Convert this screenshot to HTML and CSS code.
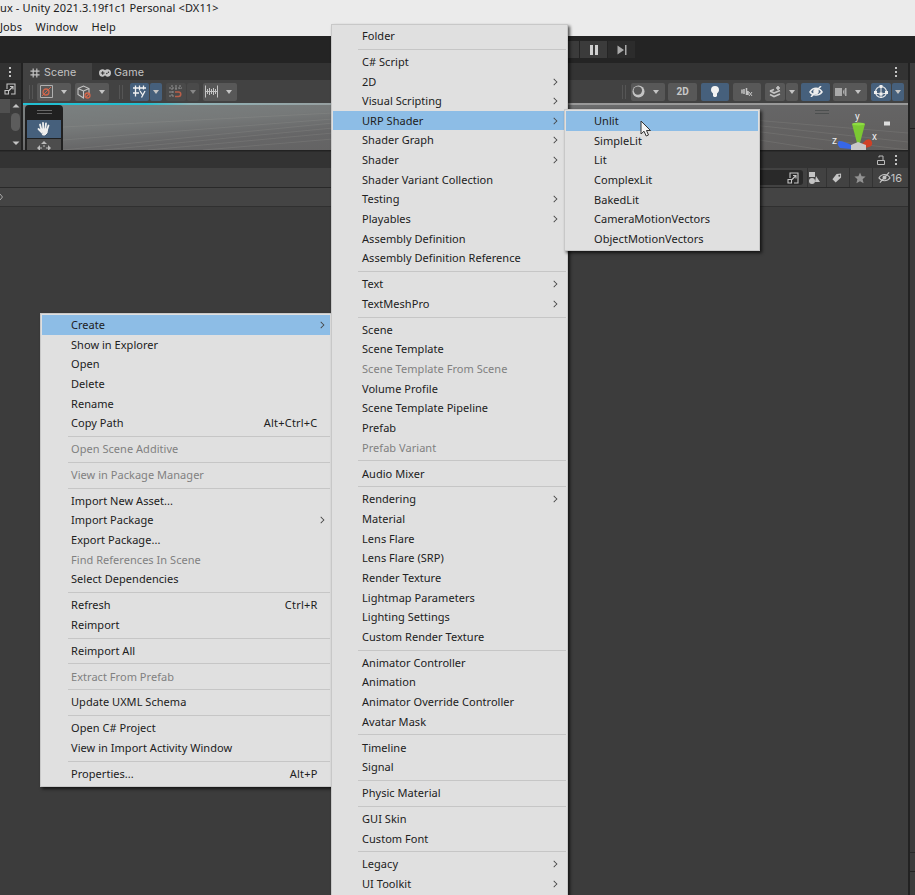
FILE: index.html
```html
<!DOCTYPE html>
<html lang="en">
<head>
<meta charset="utf-8">
<title>Unity 2021.3.19f1c1 Personal</title>
<link rel="stylesheet" href="styles.css">
</head>
<body>
<div class="app">
  <header class="titlebar">
    <div class="title">ux - Unity 2021.3.19f1c1 Personal &lt;DX11&gt;</div>
    <nav class="menubar"><span>Jobs</span><span>Window</span><span>Help</span></nav>
  </header>
  <div class="playbar">
    <div class="play"></div>
    <div class="play"><svg width="10" height="10" viewBox="0 0 10 10"><path fill="#d0d0d0" d="M1 0h3v10H1zM6 0h3v10H6z"/></svg></div>
    <div class="play off"><svg width="10" height="10" viewBox="0 0 10 10"><path fill="#aaa" d="M0.500 0.500L7 5L0.500 9.500zM8 0h1.500v10H8z"/></svg></div>
  </div>
  <div class="workspace">
    <div class="main">
      <div class="upper">
        <aside class="side">
          <div class="side-head"><svg width="4" height="12" viewBox="0 0 4 12"><path fill="#c4c4c4" d="M1 1h2v2H1zM1 5h2v2H1zM1 9h2v2H1z"/></svg></div>
          <div class="side-tool"><svg width="12" height="12" viewBox="0 0 12 12" fill="none" stroke="#c4c4c4" stroke-width="1.100"><path d="M3 6V1h8v10H7M6 3.500h3v3M9 3.500L5 7.500M1 7.500h3.500V11H1z"/></svg></div>
          <div class="side-body">
            <div class="side-row"></div>
            <div class="scroller">
              <svg width="8" height="5" viewBox="0 0 8 5"><path fill="#c4c4c4" d="M0.500 4.500L4 1l3.500 3.500z"/></svg>
              <div class="thumb"></div>
              <svg width="8" height="5" viewBox="0 0 8 5"><path fill="#c4c4c4" d="M0.500 0.500h7L4 4z"/></svg>
            </div>
          </div>
        </aside>
        <section class="scene">
          <div class="tabs">
            <div class="tab active"><svg width="10" height="10" viewBox="0 0 11 11" stroke="#c4c4c4" stroke-width="1.300"><path d="M3.500 0.500v10M7.500 0.500v10M0.500 3.500h10M0.500 7.500h10"/></svg>Scene</div>
            <div class="tab"><svg width="12" height="8" viewBox="0 0 13 8"><path fill="#c4c4c4" d="M4 0a4 4 0 100 8q1.500 0 2.500-1.500Q7.500 8 9 8a4 4 0 100-8q-1.500 0-2.500 1Q5.500 0 4 0z"/><path d="M2 4h4M4 2v4" stroke="#333" stroke-width="1.200"/><circle cx="8.500" cy="4.500" r=".8" fill="#333"/><circle cx="10.200" cy="3.200" r=".8" fill="#333"/></svg>Game</div>
            <svg class="kebab" width="4" height="12" viewBox="0 0 4 12"><path fill="#c4c4c4" d="M1 1h2v2H1zM1 5h2v2H1zM1 9h2v2H1z"/></svg>
          </div>
          <div class="toolbar">
            <i class="grip"></i>
            <div class="btn wide"><svg width="13" height="13" viewBox="0 0 13 13" fill="none"><path stroke="#b0b0b0" d="M.5.5h12v12H.5z"/><circle cx="6" cy="7" r="3" stroke="#d0664c" stroke-width="1.300"/><path stroke="#d0664c" d="M2 11l9-9"/></svg><i class="caret"></i></div>
            <div class="btn wide"><svg width="14" height="14" viewBox="0 0 14 14" fill="none" stroke="#c4c4c4" stroke-width="1.100"><path d="M1 3.500L6.500 1 12 3.500V8M1 3.500v6L6.500 13V6L12 3.500M1 3.500L6.500 6"/><circle cx="10.500" cy="10.500" r="2.500" stroke="#d0664c" stroke-width="1.300"/><path stroke="#d0664c" d="M9 12l3-3"/></svg><i class="caret"></i></div>
            <i class="grip second"></i>
            <div class="split on"><div class="btn"><svg width="13" height="13" viewBox="0 0 13 13" fill="none" stroke="#f2f2f2" stroke-width="1.300"><path d="M2.500 0.500v11M6.500 0.500v5M10.500 0.500v4M0 3h13M0 8h6M7 6l2.300 3.500M12 6L8.500 12.500"/></svg></div><div class="btn drop"><i class="caret"></i></div></div>
            <div class="split dim"><div class="btn"><svg width="13" height="13" viewBox="0 0 13 13" fill="none" stroke="#909090"><path stroke-dasharray="2 1" d="M3 0v12M7 0v5M11 0v4M0 3h13M0 7h5M0 11h5"/><path stroke="#b95f4a" stroke-width="1.600" d="M6 7h3.500a2 2 0 010 4.500H6"/></svg></div><div class="btn drop"><i class="caret"></i></div></div>
            <div class="btn wide"><svg width="13" height="13" viewBox="0 0 13 13" stroke="#c4c4c4"><path d="M.5.5v12M12.500.5v12M2.500 4v5M4.500 3v7M6.500 4v5M8.500 3v7M10.500 4v5M0 6.500h13"/></svg><i class="caret"></i></div>
            <div class="right-tools">
              <i class="grip"></i>
              <div class="btn wide"><svg width="13" height="13" viewBox="0 0 14 14"><circle cx="7" cy="7" r="6.500" fill="#c4c4c4"/><circle cx="6.300" cy="6" r="4.500" fill="#585858"/></svg><i class="caret"></i></div>
              <div class="btn mid"><b>2D</b></div>
              <div class="btn mid on"><svg width="8" height="11" viewBox="0 0 8 11" fill="#f2f2f2"><path d="M4 0a4 4 0 014 4c0 1.500-1 2.500-2 3.500V10L5 11H3L2 10V7.500C1 6.500 0 5.500 0 4a4 4 0 014-4z"/></svg></div>
              <div class="btn mid"><svg width="12" height="10" viewBox="0 0 12 10" stroke="#c4c4c4" fill="none"><path stroke-width="1.500" d="M1 2.500v4M3 2v5M5.500 1v7M7 4v4"/><path d="M8 5l3 4M11 5L8 9"/></svg></div>
              <div class="split"><div class="btn"><svg width="12" height="12" viewBox="0 0 12 12" fill="none" stroke="#c4c4c4" stroke-width="1.700"><path d="M1 5l4 2 6-2.500M1 8.500l4 2L11 8M1 5l4-1.500M9 0v4M7 2h4"/></svg></div><div class="btn drop"><i class="caret"></i></div></div>
              <div class="btn mid on"><svg width="14" height="11" viewBox="0 0 14 11" fill="none" stroke="#eee" stroke-width="1.500"><path d="M1 6c3-5 9-5 12 0-3 4-9 4-12 0zM2 11L12 0"/><circle cx="7" cy="5.500" r="2" fill="#eee"/></svg></div>
              <div class="btn wide cam"><svg width="12" height="8" viewBox="0 0 12 8" fill="#aaa"><path d="M0 0h7v8H0zM8 3l1.500-2v6L8 5zM10 0h1.500v8H10z"/></svg><i class="caret"></i></div>
              <div class="split on"><div class="btn"><svg width="14" height="14" viewBox="0 0 14 14" fill="none" stroke="#eee"><circle cx="7" cy="7" r="5.500" stroke-width="1.200"/><path d="M1.500 8q5.500 2.500 11 0M7 1v12"/><path fill="#eee" stroke="none" d="M5.500 0h3v3h-3zM0 6h3v3H0zM11 6h3v3h-3zM5.500 7.500h3v3h-3z"/></svg></div><div class="btn drop"><i class="caret"></i></div></div>
            </div>
          </div>
          <div class="viewport">
            <div class="tools"><i class="bars"></i>
              <div class="tool on"><svg width="14" height="14" viewBox="0 0 14 14" fill="none" stroke="#eee" stroke-linecap="round"><path stroke-width="1.800" d="M4.500 8L3 2.500M6.300 7L6 1M8.300 7L9 1.300M10 8l1.500-4.500M4.500 10L1.500 7"/><path fill="#eee" d="M4 7h6.500l-.5 4-2 2H6z"/></svg></div>
              <div class="tool move"><svg width="14" height="14" viewBox="0 0 14 14" fill="#bbb"><path d="M7 0l3 3H4zM0 7l3-3v6zM14 7l-3-3v6zM6.500 4h1v2h-1zM3 6.500h2v1H3zM9 6.500h2v1H9z"/></svg></div>
            </div>
            <svg class="ground" viewBox="0 0 885 45" preserveAspectRatio="none">
              <g stroke="#a4a4a3" stroke-width=".7" opacity=".26" fill="none"><path d="M40 22L310 8M40 35L310 14M40 45L310 18M80 45L310 23M125 45L310 28M180 45L310 34M730 15L885 28M730 20L885 37M730 26L885 45M730 34L800 45"/></g>
            </svg>
            <svg class="gizmo" width="80" height="45" viewBox="0 0 80 45">
              <path stroke="#4c4f4f" d="M11 5.500h14M11 8.500h14"/>
              <path fill="#7bc832" d="M48 19h13l-5 19h-3z"/><ellipse cx="54.500" cy="19" rx="6.500" ry="1.500" fill="#8edc42"/>
              <path fill="#3767e8" d="M35 36q5 0 14 5l-2 3-11-1q-4-4-1-7z"/><path fill="#cf4026" d="M58 39l4-4q5-2 6 2t-3 5l-4 1z"/>
              <path fill="#c8c8c8" d="M47 40l7-3 8 3v5H47z"/><path fill="#ddd" d="M80 16.500h6v4h-6z"/>
              <text x="51" y="15">y</text><text x="68" y="35">x</text><text x="28" y="39">z</text>
            </svg>
          </div>
        </section>
      </div>
      <section class="project">
        <div class="project-head"><svg width="8" height="10" viewBox="0 0 8 10" fill="none" stroke="#bbb"><path d="M.5 5.500h7v4h-7zM2 2.500V1h4v4.500"/></svg><svg width="4" height="12" viewBox="0 0 4 12"><path fill="#c4c4c4" d="M1 1h2v2H1zM1 5h2v2H1zM1 9h2v2H1z"/></svg></div>
        <div class="project-tools">
          <div class="search"><svg width="12" height="12" viewBox="0 0 12 12" fill="none" stroke="#c4c4c4" stroke-width="1.100"><path d="M3 6V1h8v10H7M6 3.500h3v3M9 3.500L5 7.500M1 7.500h3.500V11H1z"/></svg></div>
          <div class="cell c1"><svg width="12" height="12" viewBox="0 0 12 12" fill="#c4c4c4"><path d="M1 0h6v5H1zM8 4l4 6H7z"/><circle cx="4" cy="9" r="3"/></svg></div>
          <div class="cell c2"><svg width="10" height="10" viewBox="0 0 11 11"><path fill="#c4c4c4" d="M5 1l5-.5V5l-6 5.500L.5 7z"/><circle cx="8" cy="3" r="1" fill="#444"/></svg></div>
          <div class="cell c3"><svg width="12" height="12" viewBox="0 0 12 12"><path fill="#929292" d="M6 .5l1.600 3.800 4 .3-3 2.700 1 4L6 9.200l-3.600 2.100 1-4-3-2.700 4-.3z"/></svg></div>
          <div class="cell c4"><svg width="13" height="11" viewBox="0 0 14 11" fill="none" stroke="#c4c4c4" stroke-width="1.300"><path d="M1 6c3-5 9-5 12 0-3 4-9 4-12 0zM2 11L12 0"/><circle cx="7" cy="5.500" r="1.500" fill="#c4c4c4"/></svg>16</div>
        </div>
        <div class="crumbs"><svg width="4" height="8" viewBox="0 0 4 8" fill="none" stroke="#aaa"><path d="M0 1l2.500 3L0 7"/></svg></div>
        <div class="files"></div>
      </section>
    </div>
    <aside class="inspector"><div class="ins-top"></div><div class="ins-mid"></div><div class="ins-low"></div><div class="ins-end"></div></aside>
  </div>
</div>

<ul class="menu asset-menu">
  <li class="sub hot">Create</li><li>Show in Explorer</li><li>Open</li><li>Delete</li><li>Rename</li><li>Copy Path<kbd>Alt+Ctrl+C</kbd></li>
  <li class="sep"></li><li class="disabled">Open Scene Additive</li>
  <li class="sep"></li><li class="disabled">View in Package Manager</li>
  <li class="sep"></li><li>Import New Asset...</li><li class="sub">Import Package</li><li>Export Package...</li><li class="disabled">Find References In Scene</li><li>Select Dependencies</li>
  <li class="sep"></li><li>Refresh<kbd>Ctrl+R</kbd></li><li>Reimport</li>
  <li class="sep"></li><li>Reimport All</li>
  <li class="sep"></li><li class="disabled">Extract From Prefab</li>
  <li class="sep"></li><li>Update UXML Schema</li>
  <li class="sep"></li><li>Open C# Project</li><li>View in Import Activity Window</li>
  <li class="sep"></li><li>Properties...<kbd>Alt+P</kbd></li>
</ul>

<ul class="menu create-menu">
  <li>Folder</li>
  <li class="sep"></li><li>C# Script</li><li class="sub">2D</li><li class="sub">Visual Scripting</li><li class="sub hot">URP Shader</li><li class="sub">Shader Graph</li><li class="sub">Shader</li><li>Shader Variant Collection</li><li class="sub">Testing</li><li class="sub">Playables</li><li>Assembly Definition</li><li>Assembly Definition Reference</li>
  <li class="sep"></li><li class="sub">Text</li><li class="sub">TextMeshPro</li>
  <li class="sep"></li><li>Scene</li><li>Scene Template</li><li class="disabled">Scene Template From Scene</li><li>Volume Profile</li><li>Scene Template Pipeline</li><li>Prefab</li><li class="disabled">Prefab Variant</li>
  <li class="sep"></li><li>Audio Mixer</li>
  <li class="sep"></li><li class="sub">Rendering</li><li>Material</li><li>Lens Flare</li><li>Lens Flare (SRP)</li><li>Render Texture</li><li>Lightmap Parameters</li><li>Lighting Settings</li><li>Custom Render Texture</li>
  <li class="sep"></li><li>Animator Controller</li><li>Animation</li><li>Animator Override Controller</li><li>Avatar Mask</li>
  <li class="sep"></li><li>Timeline</li><li>Signal</li>
  <li class="sep"></li><li>Physic Material</li>
  <li class="sep"></li><li>GUI Skin</li><li>Custom Font</li>
  <li class="sep"></li><li class="sub">Legacy</li><li class="sub">UI Toolkit</li>
</ul>

<ul class="menu shader-menu">
  <li class="hot">Unlit</li><li>SimpleLit</li><li>Lit</li><li>ComplexLit</li><li>BakedLit</li><li>CameraMotionVectors</li><li>ObjectMotionVectors</li>
</ul>
<svg class="cursor" width="12" height="18" viewBox="0 0 12 18"><path fill="#f4f4f4" stroke="#333" d="M1 1v13l3-2.800L6.200 16l2.300-1-2-4.500H10.500z"/></svg>
</body>
</html>
```
FILE: styles.css
```css
* { box-sizing: border-box; }
body { margin: 0; width: 915px; height: 895px; overflow: hidden; position: relative; background: #3c3c3c; font-family: "Noto Sans", sans-serif; font-size: 11px; color: #202020; }
svg { display: block; flex: none; }
i { display: block; flex: none; }
.app { height: 895px; display: flex; flex-direction: column; }
.titlebar { height: 36px; background: #ebebeb; letter-spacing: .12px; }
.title { height: 18px; line-height: 16px; white-space: nowrap; }
.menubar { display: flex; gap: 13.500px; line-height: 18px; letter-spacing: .1px; }
.playbar { height: 27px; background: #242424; display: flex; gap: 1px; padding: 5px 0 0 552px; flex: none; }
.play { width: 27px; height: 17px; background: #3b3b3b; display: flex; align-items: center; justify-content: center; }
.play.off { background: #2c2c2c; }
.workspace { flex: 1; display: flex; min-height: 0; }
.main { width: 908px; display: flex; flex-direction: column; }
.upper { height: 88px; display: flex; border-bottom: 1px solid #222; flex: none; }
.side { width: 23px; border-right: 2px solid #222; background: #3c3c3c; display: flex; flex-direction: column; }
.side-head { height: 17px; background: #323232; display: flex; justify-content: center; align-items: center; padding-right: 2px; }
.side-tool { height: 18px; background: #2c2c2c; padding: 3px 0 0 4px; }
.side-body { flex: 1; display: flex; border-top: 1px solid #282828; }
.side-row { width: 10px; height: 14px; background: #505050; }
.scroller { width: 11px; display: flex; flex-direction: column; align-items: center; justify-content: space-between; padding: 4px 0 4px; }
.thumb { width: 9px; height: 18px; border-radius: 5px; background: #5c5c5c; margin-bottom: 6px; }
.scene { flex: 1; display: flex; flex-direction: column; }
.tabs { height: 17px; background: #333; display: flex; font-family: Inter, sans-serif; font-size: 10.700px; letter-spacing: .1px; color: #c4c4c4; }
.tab { display: flex; align-items: center; gap: 4px; padding: 2px 0 0 7px; }
.tab:not(.active) { gap: 3px; }
.tab.active { background: #424242; width: 69px; }
.kebab { margin: 3px 10px 0 auto; }
.toolbar { height: 23px; background: #424242; display: flex; align-items: center; padding: 0 4px 0 6px; gap: 4px; }
.grip { width: 4px; height: 14px; border: 1px solid #555; border-width: 0 1px; margin-right: 1px; }
.grip.second { margin: 0 2.500px 0 6px; }
.btn { height: 18px; background: #585858; border-radius: 2px; display: flex; align-items: center; justify-content: center; color: #c8c8c8; font-size: 10px; font-family: Roboto, sans-serif; width: 20px; }
.btn.wide { width: 34px; gap: 8px; }
.toolbar > .btn.wide { padding-right: 2px; }
.toolbar > .grip:first-child { margin-right: 0; }
.btn.mid { width: 28.500px; }
.btn.drop { width: 12px; }
.split { display: flex; gap: 1px; }
.toolbar > .split .btn:not(.drop) { width: 19.500px; }
.btn.on, .on .btn, .tool.on { background: #46607c; }
.dim .btn { background: #4a4a4a; }
.dim .caret { opacity: .5; }
.caret { border: 4px solid transparent; border-width: 4px 3.500px 0; border-top-color: #c4c4c4; }
.right-tools { margin-left: auto; display: flex; align-items: center; gap: 3.600px; }
.right-tools .wide { padding-right: 4px; }
.viewport { flex: 1; position: relative; overflow: hidden; background: linear-gradient(176deg, #7b8181 0, #767979 25%, #666667 45%, #605e5d 100%); border-top: 2px solid #a0a6a6; border-image: linear-gradient(90deg, #22bfd2 0 14%, #8fb3b7 19%, #999 40%) 2; border-width: 2px 0 0; }
.ground { position: absolute; inset: 0; width: 100%; height: 100%; }
.tools { position: absolute; z-index: 1; left: 2px; top: 0; width: 38px; height: 46px; border-radius: 4px 4px 0 0; background: #202020; padding: 5px 2px 0; }
.bars { width: 15px; height: 4px; border: 1px solid #666; border-width: 1px 0; margin: 0 auto 6px; }
.tool { height: 18px; background: #4d4d4d; display: flex; justify-content: center; align-items: center; margin-bottom: 1px; }
.gizmo { position: absolute; right: 24px; top: 0; overflow: visible; font-family: Roboto, sans-serif; font-size: 10px; fill: #eee; }
.project { flex: 1; display: flex; flex-direction: column; }
.project-head { height: 17px; background: #333; border-top: 1px solid #2b2b2b; display: flex; align-items: center; justify-content: flex-end; gap: 9px; padding-right: 10px; }
.project-tools { height: 20px; background: #424242; border-bottom: 1px solid #292929; display: flex; justify-content: flex-end; }
.search { width: 270px; height: 15px; margin: 2px 4px 0 0; border-radius: 3px; background: #292929; display: flex; justify-content: flex-end; align-items: center; padding-right: 4px; }
.cell { border-left: 1px solid #333; display: flex; align-items: center; justify-content: center; }
.c1 { width: 19px; padding-right: 7px; }
.c2, .c3 { width: 23px; }
.c2 { padding-right: 3px; }
.c3 { padding-right: 2px; }
.c4 { width: 36px; padding-right: 1px; color: #c4c4c4; font: 11px Inter, sans-serif; }
.crumbs { height: 19px; background: #444; border-bottom: 1px solid #303030; padding-top: 5px; }
.files { flex: 1; background: #3c3c3c; }
.inspector { flex: 1; border-left: 2px solid #222; background: #3c3c3c; display: flex; flex-direction: column; }
.ins-top { height: 66px; border-bottom: 1px solid #222; }
.ins-mid { flex: 1; border-bottom: 1px solid #292929; }
.ins-low { height: 19px; border-bottom: 1px solid #222; }
.ins-end { height: 23px; }

.menu { position: absolute; margin: 0; padding: 1px; list-style: none; background: #e0e0e0; border: 1px solid #c8c8c8; box-shadow: 2px 2px 3px rgba(0, 0, 0, .65); white-space: nowrap; letter-spacing: .04px; }
.menu li { height: 19.660px; line-height: 19px; padding-left: 29px; display: flex; }
.menu li.sep { height: 6.200px; margin-left: 26px; padding: 0; background: linear-gradient(#c6c6c6, #c6c6c6) 0 3px / 100% 1px no-repeat; }
.menu .hot { background: #8dbde6; }
.menu .disabled { color: #808080; }
.menu kbd { font: inherit; margin-left: auto; padding-right: 12.500px; letter-spacing: .2px; }
.menu .sub::after { content: ""; width: 5px; height: 5px; border: solid #444; border-width: 1px 1px 0 0; transform: scale(.8) rotate(45deg); margin: 7px 9.500px 0 auto; }
.asset-menu { left: 40px; top: 313px; width: 292px; height: 474px; }
.menu.asset-menu .sub::after { margin-right: 6px; }
.create-menu { left: 331px; top: 24px; width: 237px; height: 880px; }
.create-menu li.sep { margin-left: 25px; }
.shader-menu { left: 564px; top: 109px; width: 196px; height: 142px; }
.shader-menu li { padding-left: 28px; }
.cursor { position: absolute; left: 640px; top: 120px; }
```
